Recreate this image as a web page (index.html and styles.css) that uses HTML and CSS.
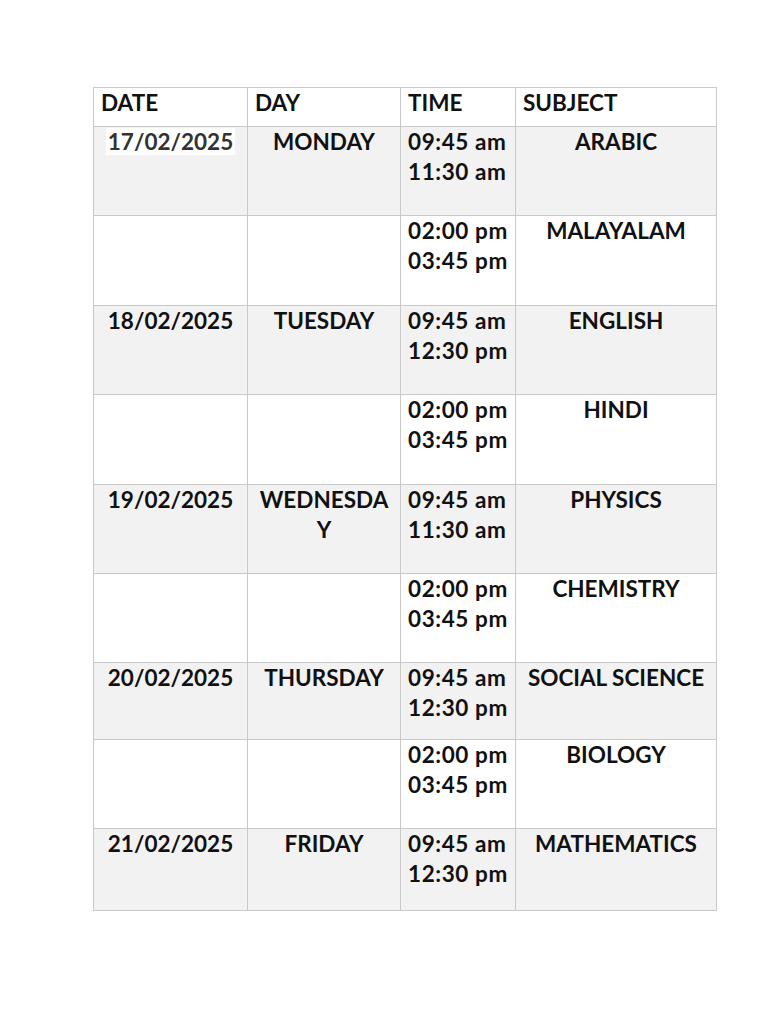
FILE: index.html
```html
<!DOCTYPE html>
<html lang="en">
<head>
<meta charset="utf-8">
<title>Exam Timetable</title>
<link rel="stylesheet" href="styles.css">
</head>
<body>
<main class="page">
  <table class="timetable">
    <colgroup>
      <col class="c-date"><col class="c-day"><col class="c-time"><col class="c-subject">
    </colgroup>
    <thead>
      <tr class="head">
        <th>DATE</th><th>DAY</th><th>TIME</th><th>SUBJECT</th>
      </tr>
    </thead>
    <tbody>
      <tr class="shade r89">
        <td class="ctr"><span class="hl">17/02/2025</span></td>
        <td class="ctr">MONDAY</td>
        <td class="time">09:45 am<br>11:30 am</td>
        <td class="ctr">ARABIC</td>
      </tr>
      <tr class="r90">
        <td></td><td></td>
        <td class="time">02:00 pm<br>03:45 pm</td>
        <td class="ctr">MALAYALAM</td>
      </tr>
      <tr class="shade r89">
        <td class="ctr">18/02/2025</td>
        <td class="ctr">TUESDAY</td>
        <td class="time">09:45 am<br>12:30 pm</td>
        <td class="ctr">ENGLISH</td>
      </tr>
      <tr class="r90">
        <td></td><td></td>
        <td class="time">02:00 pm<br>03:45 pm</td>
        <td class="ctr">HINDI</td>
      </tr>
      <tr class="shade r89">
        <td class="ctr">19/02/2025</td>
        <td class="ctr wrap">WEDNESDAY</td>
        <td class="time">09:45 am<br>11:30 am</td>
        <td class="ctr">PHYSICS</td>
      </tr>
      <tr class="r89">
        <td></td><td></td>
        <td class="time">02:00 pm<br>03:45 pm</td>
        <td class="ctr">CHEMISTRY</td>
      </tr>
      <tr class="shade r77">
        <td class="ctr">20/02/2025</td>
        <td class="ctr">THURSDAY</td>
        <td class="time">09:45 am<br>12:30 pm</td>
        <td class="ctr">SOCIAL SCIENCE</td>
      </tr>
      <tr class="r89">
        <td></td><td></td>
        <td class="time">02:00 pm<br>03:45 pm</td>
        <td class="ctr">BIOLOGY</td>
      </tr>
      <tr class="shade r82">
        <td class="ctr">21/02/2025</td>
        <td class="ctr">FRIDAY</td>
        <td class="time">09:45 am<br>12:30 pm</td>
        <td class="ctr">MATHEMATICS</td>
      </tr>
    </tbody>
  </table>
</main>
</body>
</html>
```
FILE: styles.css
```css
html, body {
  margin: 0;
  padding: 0;
  background: #ffffff;
}
body {
  font-family: Lato, "Liberation Sans", sans-serif;
  color: #111111;
}
.page {
  padding: 87px 0 0 93px;
}
.timetable {
  border-collapse: collapse;
  table-layout: fixed;
  width: 623px;
  font-size: 22.5px;
  font-weight: 700;
  line-height: 29.5px;
}
.c-date { width: 154px; }
.c-day { width: 153px; }
.c-time { width: 115px; }
.c-subject { width: 201px; }
.timetable th,
.timetable td {
  border: 1px solid #c9c9c9;
  vertical-align: top;
  padding: 0 7px 0 7px;
  text-align: left;
}
.timetable th {
  font-weight: 700;
}
.head { height: 39px; }
.r89 { height: 89px; }
.r90 { height: 90px; }
.r77 { height: 77px; }
.r82 { height: 82px; }
.shade td { background: #f2f2f2; }
.timetable td.ctr { text-align: center; }
.timetable td.time { letter-spacing: 0.6px; white-space: nowrap; }
.wrap { overflow-wrap: anywhere; word-break: break-all; }
.hl {
  background: #ffffff;
  color: #333333;
  padding: 0 2px;
}
```
